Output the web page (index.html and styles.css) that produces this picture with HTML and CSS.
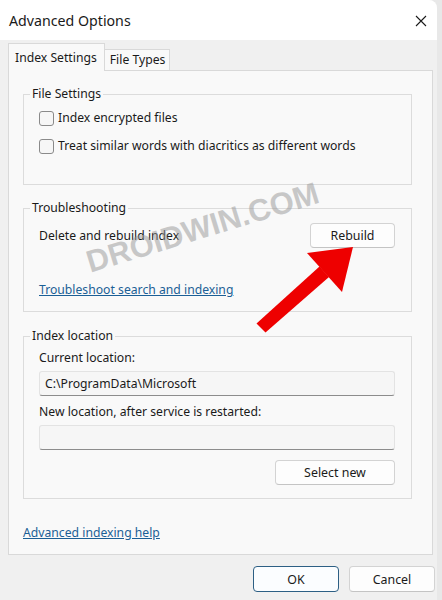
FILE: index.html
```html
<!DOCTYPE html>
<html>
<head>
  <link rel="stylesheet" href="styles.css">
</head>
<body>
  <div class="window">
    <div class="titlebar">
      <span class="title">Advanced Options</span>
      <svg class="close" width="12" height="12" viewBox="0 0 12 12">
        <path d="M1 1 L11 11 M11 1 L1 11" stroke="#1a1a1a" stroke-width="1.1" fill="none"/>
      </svg>
    </div>

    <div class="tabs">
      <div class="tab active">Index Settings</div>
      <div class="tab">File Types</div>
    </div>

    <div class="panel">
      <fieldset class="group group-files">
        <legend>File Settings</legend>
        <label class="check"><span class="box"></span>Index encrypted files</label>
        <label class="check check-second"><span class="box"></span>Treat similar words with diacritics as different words</label>
      </fieldset>

      <fieldset class="group group-trouble">
        <legend>Troubleshooting</legend>
        <div class="row">
          <span>Delete and rebuild index</span>
          <button type="button" class="btn btn-rebuild">Rebuild</button>
        </div>
        <a class="link link-trouble" href="#">Troubleshoot search and indexing</a>
      </fieldset>

      <fieldset class="group group-location">
        <legend>Index location</legend>
        <div class="field-label">Current location:</div>
        <div class="field">C:\ProgramData\Microsoft</div>
        <div class="field-label field-label-new">New location, after service is restarted:</div>
        <div class="field field-new"></div>
        <div class="row-end">
          <button type="button" class="btn btn-select">Select new</button>
        </div>
      </fieldset>

      <a class="link link-help" href="#">Advanced indexing help</a>
    </div>

    <div class="actions">
      <button type="button" class="btn btn-ok">OK</button>
      <button type="button" class="btn btn-cancel">Cancel</button>
    </div>

    <div class="watermark">DROIDWIN.COM</div>

    <svg class="arrow" width="442" height="600" viewBox="0 0 442 600">
      <polygon points="256.5,323.5 319.5,266.5 329,277 265.5,332.5" fill="#ee0000"/>
      <polygon points="353,247 307,253 342,292" fill="#ee0000"/>
    </svg>
  </div>
</body>
</html>
```

FILE: styles.css
```css
body {
  margin: 0;
  background-color: #e8e8e8;
  font-family: "Noto Sans", sans-serif;
  font-size: 12.2px;
  line-height: 16px;
  color: #1a1a1a;
}

.window {
  position: relative;
  width: 437px;
  height: 600px;
  background-color: #f0f0f0;
  border-top-right-radius: 8px;
  overflow: hidden;
}

.titlebar {
  height: 40px;
  background-color: #fff;
  display: flex;
  align-items: center;
  justify-content: space-between;
  padding: 0 10px 0 9px;
}

.title {
  font-size: 14.2px;
  line-height: 20px;
  margin-top: 2px;
}

.close {
  margin-top: 1px;
}

.tabs {
  display: flex;
  align-items: flex-end;
  margin-top: 3px;
  padding-left: 8px;
}

.tab {
  border: 1px solid #d9d9d9;
  border-bottom: none;
  background-color: #f9f9f9;
  padding: 2px 4px 0 5px;
  height: 18px;
}

.tab.active {
  position: relative;
  z-index: 1;
  height: 21px;
  padding: 6px 7px 0 6px;
  margin-bottom: -1px;
}

.tab + .tab {
  border-left: none;
}

.panel {
  margin: 0 4px 0 8px;
  border: 1px solid #d9d9d9;
  background-color: #f9f9f9;
  padding: 15px 0 13px 0;
}

.group {
  margin: 0 20px 0 14px;
  border: 1px solid #dcdcdc;
  padding: 0 16px 0 15px;
}

.group legend {
  margin-left: -9px;
  padding: 0 2px;
}

.group-files {
  padding-top: 6px;
  padding-bottom: 28px;
}

.group-trouble {
  margin-top: 15px;
  padding-top: 7px;
  padding-bottom: 13px;
}

.group-location {
  margin-top: 16px;
  padding-top: 6px;
  padding-bottom: 13px;
}

.check {
  display: flex;
  align-items: center;
  height: 20px;
}

.check-second {
  margin-top: 8px;
}

.box {
  width: 13px;
  height: 13px;
  border: 1px solid #8a8a8a;
  border-radius: 3px;
  background-color: #f6f6f6;
  margin-right: 4px;
}

.row {
  display: flex;
  align-items: center;
  justify-content: space-between;
  height: 25px;
}

.btn {
  font-family: "Noto Sans", sans-serif;
  font-size: 12.4px;
  color: #1a1a1a;
  background-color: #fdfdfd;
  border: 1px solid #d3d3d3;
  border-bottom-color: #c4c4c4;
  border-radius: 4px;
  height: 25px;
  padding: 0;
}

.btn-rebuild {
  width: 85px;
}

.btn-select {
  width: 120px;
}

.row-end {
  display: flex;
  justify-content: flex-end;
  margin-top: 10px;
}

.link {
  display: block;
  color: #1b5f96;
  text-decoration: underline;
}

.link-trouble {
  margin-top: 34px;
}

.link-help {
  margin: 26px 0 0 14px;
}

.field-new {
  margin-top: 4px;
}

.field-label-new {
  margin-top: 8px;
}

.field {
  height: 23px;
  margin-top: 5px;
  border: 1px solid #e3e3e3;
  border-bottom-color: #8c8c8c;
  border-radius: 3px;
  background-color: #f6f6f6;
  padding: 0 0 0 5px;
  line-height: 23px;
}

.actions {
  display: flex;
  justify-content: flex-end;
  gap: 10px;
  margin-top: 11px;
  padding-right: 2px;
}

.btn-ok,
.btn-cancel {
  width: 86px;
  height: 26px;
}

.btn-ok {
  border: 1px solid #2d5f84;
  background-color: #fbfdff;
}

.watermark {
  position: absolute;
  left: 82px;
  top: 212px;
  font-family: "Liberation Sans", sans-serif;
  font-weight: bold;
  font-size: 31px;
  line-height: 31px;
  color: rgba(150, 150, 150, 0.5);
  transform: rotate(-17deg);
  pointer-events: none;
  white-space: nowrap;
}

.arrow {
  position: absolute;
  left: 0;
  top: 0;
  pointer-events: none;
}
```
